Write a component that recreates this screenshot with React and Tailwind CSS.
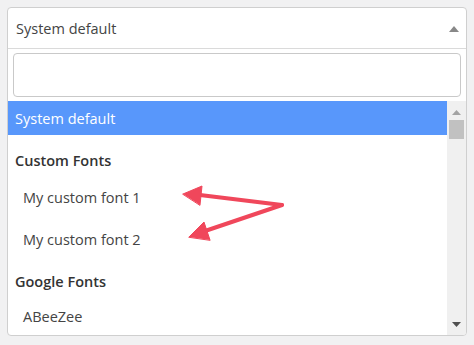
import React from 'react'

const font = { fontFamily: '"Open Sans", "Noto Sans", Arial, sans-serif' }

function Arrows() {
  return (
    <svg className="absolute left-0 top-0 pointer-events-none" width="474" height="345" viewBox="0 0 474 345">
      <g fill="#f0475b" stroke="#f0475b" strokeLinecap="round" strokeLinejoin="round">
        <line x1="282" y1="205" x2="200" y2="195" strokeWidth="4" />
        <line x1="282" y1="205" x2="205" y2="231" strokeWidth="4" />
        <polygon points="183,194 202,186 200,205" strokeWidth="1" />
        <polygon points="189,237 204,222 210,240" strokeWidth="1" />
      </g>
    </svg>
  )
}

export default function App() {
  return (
    <div className="relative w-[474px] h-[345px] bg-[#f1f1f2] overflow-hidden" style={font}>
      <div className="absolute left-[7px] top-[7px] w-[460px] h-[329px] bg-white border border-[#cfcfcf] rounded-[4px] flex flex-col overflow-hidden">
        {/* selection */}
        <div className="h-[41px] shrink-0 flex items-center justify-between pl-[8px] pr-[7px] pt-[2px] border-b border-[#dadada]">
          <span className="text-[14.5px] text-[#444]">System default</span>
          <svg width="10" height="6" viewBox="0 0 10 6">
            <polygon points="0,6 10,6 5,0" fill="#888" />
          </svg>
        </div>

        {/* search */}
        <div className="shrink-0 px-[5px] pt-[4px] pb-[4px]">
          <div className="h-[44px] border border-[#c9c9c9] rounded-[4px]" />
        </div>

        {/* results */}
        <div className="flex flex-1 min-h-0">
          <div className="flex-1 flex flex-col text-[14.5px] text-[#444]">
            <div className="h-[34px] shrink-0 flex items-center pl-[7px] pt-[2px] bg-[#5897fb] text-white">System default</div>
            <div className="mt-[14px] leading-6 pl-[7px] font-semibold text-[#333]">Custom Fonts</div>
            <div className="mt-[13px] leading-6 pl-[15px]">My custom font 1</div>
            <div className="mt-[18px] leading-6 pl-[15px]">My custom font 2</div>
            <div className="mt-[18px] leading-6 pl-[7px] font-semibold text-[#333]">Google Fonts</div>
            <div className="mt-[11px] leading-6 pl-[15px]">ABeeZee</div>
          </div>
          <div className="w-[19px] shrink-0 bg-[#f0f0f0] flex flex-col items-center">
            <svg className="mt-[9px]" width="9" height="5" viewBox="0 0 9 5">
              <polygon points="0,5 9,5 4.5,0" fill="#a3a3a3" />
            </svg>
            <div className="mt-[5px] w-[15px] h-[19px] bg-[#c1c1c1]" />
            <div className="flex-1" />
            <svg className="mb-[8px]" width="9" height="5" viewBox="0 0 9 5">
              <polygon points="0,0 9,0 4.5,5" fill="#505050" />
            </svg>
          </div>
        </div>
      </div>
      <Arrows />
    </div>
  )
}
